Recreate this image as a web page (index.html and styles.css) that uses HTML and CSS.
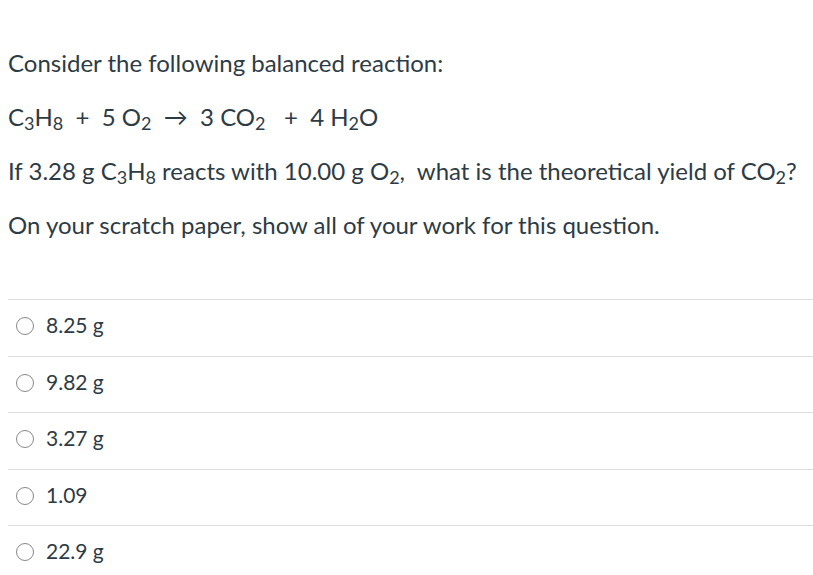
FILE: index.html
```html
<!DOCTYPE html>
<html>
<head>
<meta charset="utf-8">
<link rel="stylesheet" href="styles.css">
</head>
<body>
<div class="question">
  <p class="q-line">Consider the following balanced reaction:</p>
  <p class="q-line">C<sub>3</sub>H<sub>8</sub>&nbsp; + &nbsp;5 O<sub>2</sub> &nbsp;→&nbsp; 3 CO<sub>2</sub> &nbsp; + &nbsp;4 H<sub>2</sub>O</p>
  <p class="q-line">If 3.28 g C<sub>3</sub>H<sub>8</sub> reacts with 10.00 g O<sub>2</sub>,&nbsp; what is the theoretical yield of CO<sub>2</sub>?</p>
  <p class="q-line">On your scratch paper, show all of your work for this question.</p>
</div>
<div class="answers">
  <label class="answer"><span class="radio"></span><span class="answer-text">8.25 g</span></label>
  <label class="answer"><span class="radio"></span><span class="answer-text">9.82 g</span></label>
  <label class="answer"><span class="radio"></span><span class="answer-text">3.27 g</span></label>
  <label class="answer"><span class="radio"></span><span class="answer-text">1.09</span></label>
  <label class="answer"><span class="radio"></span><span class="answer-text">22.9 g</span></label>
</div>
</body>
</html>
```
FILE: styles.css
```css
html, body {
  margin: 0;
  padding: 0;
  background: #ffffff;
}
body {
  font-family: Lato, "Liberation Sans", sans-serif;
  color: #2d3b45;
  padding: 0 0 0 8px;
}
.question {
  padding-top: 48px;
}
.q-line {
  margin: 0 0 24px 0;
  font-size: 24px;
  line-height: 30px;
}
.q-line sub {
  font-size: 0.75em;
  line-height: 0;
  vertical-align: -0.2em;
}
.answers {
  margin-top: 59px;
}
.answer {
  display: flex;
  align-items: center;
  height: 56.5px;
  padding-bottom: 6px;
  box-sizing: border-box;
  border-top: 1px solid #dddddd;
}
.radio {
  width: 18px;
  height: 18px;
  border: 1.5px solid #888888;
  border-radius: 50%;
  margin-left: 8px;
  margin-right: 12px;
  margin-top: 3px;
  box-sizing: border-box;
}
.answer-text {
  font-size: 21px;
}
```
